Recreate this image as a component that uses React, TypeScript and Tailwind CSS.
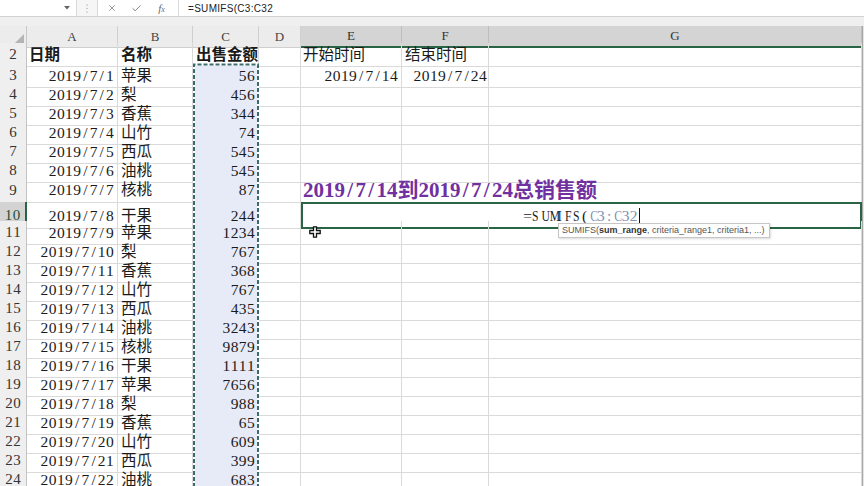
import { X, Check } from "lucide-react";

const GRID = "grid grid-cols-[27px_91px_75px_66px_42px_101px_87px_373px_2px]";
const SERIF = "font-['Liberation_Serif','Noto_Sans_CJK_SC',serif]";

const rows: [string, string, string][] = [
  ["2019/7/1", "苹果", "56"],
  ["2019/7/2", "梨", "456"],
  ["2019/7/3", "香蕉", "344"],
  ["2019/7/4", "山竹", "74"],
  ["2019/7/5", "西瓜", "545"],
  ["2019/7/6", "油桃", "545"],
  ["2019/7/7", "核桃", "87"],
  ["2019/7/8", "干果", "244"],
  ["2019/7/9", "苹果", "1234"],
  ["2019/7/10", "梨", "767"],
  ["2019/7/11", "香蕉", "368"],
  ["2019/7/12", "山竹", "767"],
  ["2019/7/13", "西瓜", "435"],
  ["2019/7/14", "油桃", "3243"],
  ["2019/7/15", "核桃", "9879"],
  ["2019/7/16", "干果", "1111"],
  ["2019/7/17", "苹果", "7656"],
  ["2019/7/18", "梨", "988"],
  ["2019/7/19", "香蕉", "65"],
  ["2019/7/20", "山竹", "609"],
  ["2019/7/21", "西瓜", "399"],
  ["2019/7/22", "油桃", "683"],
];

// Half-width characters get a fixed advance, like the sheet's default Song font.
// Capitals are narrowed so they fit that advance.
function Chars({ s, size = "md" }: { s: string; size?: "md" | "lg" | "hd" }) {
  const w = size === "lg" ? "w-[10.5px]" : size === "hd" ? "w-[8px]" : "w-[8.2px]";
  return (
    <>
      {Array.from(s).map((c, i) => {
        if (c.charCodeAt(0) >= 128) return <span key={i}>{c}</span>;
        const upper = c >= "A" && c <= "Z";
        return (
          <span key={i} className={`inline-block text-center ${w}`}>
            {upper ? <span className="inline-block scale-x-75">{c}</span> : c}
          </span>
        );
      })}
    </>
  );
}

const cellBase = "border-r border-b border-[#dadada] flex whitespace-nowrap overflow-visible";

function RowHead({ n }: { n: number }) {
  const active = n === 10;
  return (
    <div
      className={`flex items-center justify-center border-b border-[#d4d4d4] text-[15px] ${SERIF} ${
        active
          ? "bg-[#d3d3d3] text-[#1d4f35] border-r-2 border-r-[#296445]"
          : "bg-[#efefef] text-[#333] border-r border-r-[#c4c4c4]"
      }`}
    >
      <Chars s={String(n)} size="hd" />
    </div>
  );
}

function heightFor(n: number) {
  if (n === 2) return "h-[21px]";
  if (n === 9) return "h-[24px]";
  return "h-[19px]";
}

function PlusCursor() {
  return (
    <svg width="12" height="12" viewBox="0 0 12 12">
      <path
        d="M4.5 0.8 H7.5 V4.5 H11.2 V7.5 H7.5 V11.2 H4.5 V7.5 H0.8 V4.5 H4.5 Z"
        fill="#fff"
        stroke="#111"
        strokeWidth="1.3"
        strokeLinejoin="miter"
      />
    </svg>
  );
}

export default function App() {
  const align = (n: number) => (n === 9 ? "items-end pb-[1px]" : "items-center");

  return (
    <div className="relative w-[864px] h-[486px] overflow-hidden bg-white text-[#1a1a1a]">
      {/* formula bar */}
      <div className="flex h-[17px] bg-[#fbfbfb] border-b border-[#d2d2d2]">
        <div className="w-[77px] bg-white border-r border-[#dadada] flex items-center justify-end pr-[6px]">
          <svg width="6" height="4" viewBox="0 0 6 4">
            <path d="M0 0 H6 L3 3.5 Z" fill="#666" />
          </svg>
        </div>
        <div className="w-[20px] bg-[#f6f6f6] flex items-center justify-center">
          <svg width="2" height="9" viewBox="0 0 2 9">
            <circle cx="1" cy="1" r="0.8" fill="#b8b8b8" />
            <circle cx="1" cy="4.5" r="0.8" fill="#b8b8b8" />
            <circle cx="1" cy="8" r="0.8" fill="#b8b8b8" />
          </svg>
        </div>
        <div className="w-[82px] bg-white border-l border-r border-[#dadada] flex items-center pl-[1px] text-[#6a6a6a]">
          <div className="w-[25px] flex justify-center">
            <X size={10} strokeWidth={1.6} />
          </div>
          <div className="w-[25px] flex justify-center">
            <Check size={11} strokeWidth={1.8} />
          </div>
          <div className="w-[25px] flex justify-center font-['Liberation_Serif',serif] italic text-[11px] leading-none">
            f<span className="text-[8px] mt-[3px]">x</span>
          </div>
        </div>
        <div className="flex-1 bg-white flex items-center pl-[9px] font-['Liberation_Sans',sans-serif] text-[10px] tracking-[0.3px] text-[#222]">
          =SUMIFS(C3:C32
        </div>
      </div>
      <div className="h-[9px] bg-[#efefef]" />

      {/* column headers */}
      <div className={`${GRID} h-[17px] font-['Liberation_Serif',serif] text-[13px]`}>
        <div className="bg-[#ececec] border-r border-b border-[#c8c8c8] flex items-end justify-end pr-[2px] pb-[2px]">
          <svg width="11" height="11" viewBox="0 0 11 11">
            <path d="M11 0 V11 H0 Z" fill="#b4b4b4" />
          </svg>
        </div>
        {["A", "B", "C", "D"].map((c) => (
          <div
            key={c}
            className="bg-[#ececec] border-r border-b border-[#cfcfcf] flex items-center justify-center text-[#444]"
          >
            {c}
          </div>
        ))}
        {["E", "F", "G"].map((c) => (
          <div
            key={c}
            className="bg-[#d4d4d4] border-r border-[#bdbdbd] border-b-2 border-b-[#296445] flex items-center justify-center text-[#333]"
          >
            {c}
          </div>
        ))}
        <div className="bg-[#e4e4e4] border-l border-[#a8a8a8]" />
      </div>

      {/* sheet body */}
      <div className={`${SERIF} text-[15.5px]`}>
        {/* row 2: headings */}
        <div className={`${GRID} ${heightFor(2)}`}>
          <RowHead n={2} />
          <div className={`${cellBase} items-center pl-[2px] font-bold`}>
            <Chars s="日期" />
          </div>
          <div className={`${cellBase} items-center pl-[3px] font-bold`}>
            <Chars s="名称" />
          </div>
          <div className={`${cellBase} items-center pl-[3px] font-bold`}>
            <Chars s="出售金额" />
          </div>
          <div className={cellBase} />
          <div className={`${cellBase} items-center pl-[2px]`}>
            <Chars s="开始时间" />
          </div>
          <div className={`${cellBase} items-center pl-[3px]`}>
            <Chars s="结束时间" />
          </div>
          <div className={cellBase} />
          <div className="bg-[#e4e4e4] border-l border-[#a8a8a8]" />
        </div>

        {rows.map(([date, name, amt], i) => {
          const n = i + 3;
          return (
            <div key={n} className={`${GRID} ${heightFor(n)}`}>
              <RowHead n={n} />
              <div className={`${cellBase} ${align(n)} justify-end pr-[3px]`}>
                <Chars s={date} />
              </div>
              <div className={`${cellBase} ${align(n)} pl-[3px]`}>
                <Chars s={name} />
              </div>
              <div className={`${cellBase} ${align(n)} justify-end pr-[3px] bg-[#e7ebf7]`}>
                <Chars s={amt} />
              </div>
              <div className={cellBase} />
              {n === 3 ? (
                <>
                  <div className={`${cellBase} items-center justify-end pr-[3px]`}>
                    <Chars s="2019/7/14" />
                  </div>
                  <div className={`${cellBase} items-center justify-end pr-[1px]`}>
                    <Chars s="2019/7/24" />
                  </div>
                  <div className={cellBase} />
                </>
              ) : n === 9 ? (
                <div
                  className={`${cellBase} col-span-3 items-end pl-[2px] pb-[1px] text-[21px] leading-none font-bold text-[#7030a0]`}
                >
                  <Chars s="2019/7/14到2019/7/24总销售额" size="lg" />
                </div>
              ) : n === 10 ? (
                <div className="col-span-3 border-2 border-[#296445] flex items-center justify-center">
                  <span className="flex items-center">
                    <Chars s="=SUMIFS(" />
                    <span className="text-[#7d8fb5] flex">
                      <Chars s="C3:C32" />
                    </span>
                    <span className="w-[1px] h-[15px] bg-[#111] ml-[1px]" />
                  </span>
                </div>
              ) : (
                <>
                  <div className={cellBase} />
                  <div className={cellBase} />
                  <div className={cellBase} />
                </>
              )}
              <div className="bg-[#e4e4e4] border-l border-[#a8a8a8]" />
            </div>
          );
        })}
      </div>

      {/* copy/reference marquee around C3:C32 */}
      <svg
        className="absolute left-[192px] top-[63px]"
        width="68"
        height="430"
        viewBox="0 0 68 430"
      >
        <path d="M2 430 V1.5 H66 V430" fill="none" stroke="#ffffff" strokeWidth="2" />
        <path
          d="M2 430 V1.5 H66 V430"
          fill="none"
          stroke="#3b6c6c"
          strokeWidth="2"
          strokeDasharray="4 2"
        />
      </svg>

      {/* mouse pointer */}
      <div className="absolute left-[309px] top-[226px]">
        <PlusCursor />
      </div>

      {/* function argument hint */}
      <div className="absolute left-[558px] top-[223px] h-[15px] w-[212px] bg-white border border-[#c6c6c6] shadow-[1px_1px_2px_rgba(0,0,0,0.15)] flex items-center pl-[3px] font-['Liberation_Sans',sans-serif] text-[9px] text-[#555] whitespace-nowrap">
        SUMIFS(<span className="font-bold text-[#333]">sum_range</span>, criteria_range1, criteria1, ...)
      </div>
    </div>
  );
}
